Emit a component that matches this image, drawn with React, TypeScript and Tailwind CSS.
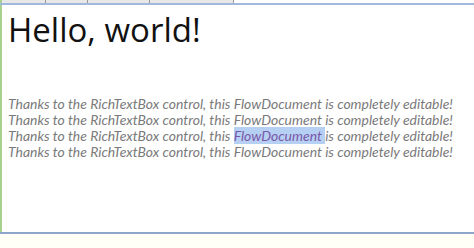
const line = "Thanks to the RichTextBox control, this ";
const rest = "is completely editable!";

export default function App() {
  return (
    <div className="flex h-[248px] w-[474px] flex-col bg-white" style={{ fontFamily: "'Open Sans', 'Noto Sans', sans-serif" }}>
      <div className="flex h-[3px] bg-[#e8e8e8]">
        <div className="w-[2px] bg-[#a9d18e]" />
        <div className="w-[44px] border-r border-[#9a9a9a]" />
        <div className="w-[42px] border-r border-[#9a9a9a]" />
        <div className="w-[62px] border-r border-[#9a9a9a]" />
        <div className="w-[84px] border-r border-[#9a9a9a]" />
        <div className="flex-1 bg-white" />
      </div>
      <div className="flex flex-1 border-t-2 border-[#9fb8dc]">
        <div className="w-[2px] bg-[#a9d18e]" />
        <div className="flex-1 pl-[6px]">
          <h1 className="mt-[6px] text-[33px] leading-[38px] text-[#111]">Hello, world!</h1>
          <div className="mt-[47px] flex flex-col text-[13.95px] italic leading-[16px] text-[#7a7a7a]" style={{ fontFamily: "Lato, 'Open Sans', sans-serif" }}>
            <p className="h-[16px]">{line}FlowDocument {rest}</p>
            <p className="h-[16px]">{line}FlowDocument {rest}</p>
            <p className="h-[16px]">
              {line}
              <span className="bg-[#b6d0f3] text-[#7a57a8]">FlowDocument </span>
              {rest}
            </p>
            <p className="h-[16px]">{line}FlowDocument {rest}</p>
          </div>
        </div>
      </div>
      <div className="h-[2px] bg-[#8ea5cc]" />
      <div className="h-[14px] bg-[#fffff8]" />
    </div>
  );
}
